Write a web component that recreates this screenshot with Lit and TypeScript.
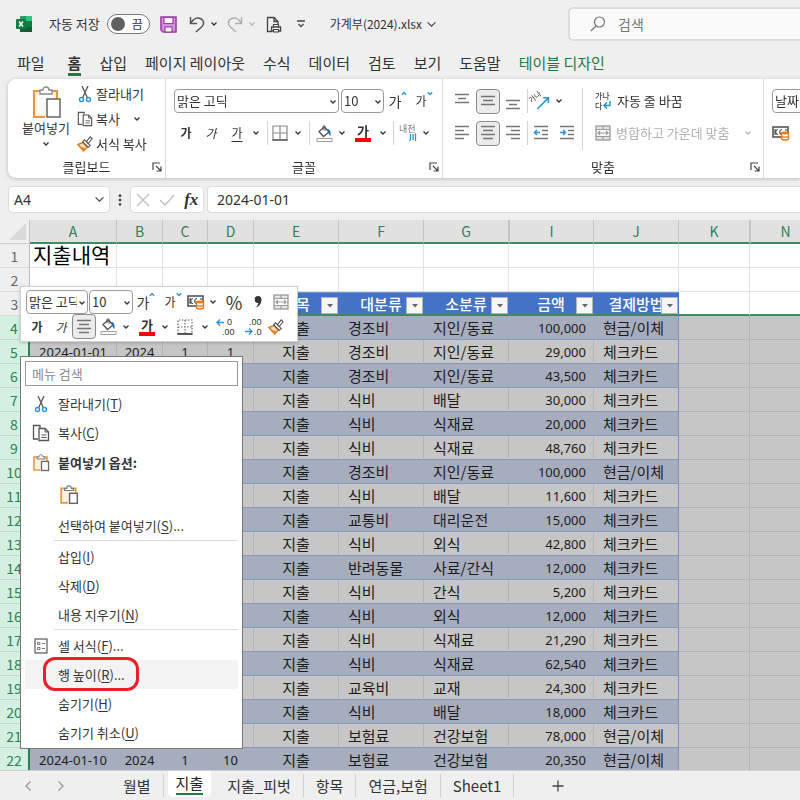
import { LitElement, html, css, svg, nothing } from "lit";
import { customElement } from "lit/decorators.js";
import { classMap } from "lit/directives/class-map.js";

type Expense = [string, string, string, string];

const expenses: Expense[] = [
  ["경조비", "지인/동료", "100,000", "현금/이체"],
  ["경조비", "지인/동료", "29,000", "체크카드"],
  ["경조비", "지인/동료", "43,500", "체크카드"],
  ["식비", "배달", "30,000", "체크카드"],
  ["식비", "식재료", "20,000", "체크카드"],
  ["식비", "식재료", "48,760", "체크카드"],
  ["경조비", "지인/동료", "100,000", "현금/이체"],
  ["식비", "배달", "11,600", "체크카드"],
  ["교통비", "대리운전", "15,000", "체크카드"],
  ["식비", "외식", "42,800", "체크카드"],
  ["반려동물", "사료/간식", "12,000", "체크카드"],
  ["식비", "간식", "5,200", "체크카드"],
  ["식비", "외식", "12,000", "체크카드"],
  ["식비", "식재료", "21,290", "체크카드"],
  ["식비", "식재료", "62,540", "체크카드"],
  ["교육비", "교재", "24,300", "체크카드"],
  ["식비", "배달", "18,000", "체크카드"],
  ["보험료", "건강보험", "78,000", "현금/이체"],
  ["보험료", "건강보험", "20,350", "현금/이체"],
];

const dates: Record<number, string[]> = {
  5: ["2024-01-01", "2024", "1", "1"],
  22: ["2024-01-10", "2024", "1", "10"],
};

const columns = ["A", "B", "C", "D", "E", "F", "G", "I", "J", "K", "N"];
const ribbonTabs = ["파일", "홈", "삽입", "페이지 레이아웃", "수식", "데이터", "검토", "보기", "도움말", "테이블 디자인"];
const sheetTabs = ["월별", "지출", "지출_피벗", "항목", "연금,보험", "Sheet1"];

const lines = (rows: number[][]) => svg`<g stroke="#757575" stroke-width="1.5">${rows.map(
  ([x1, x2, y]) => svg`<path d="M${x1} ${y}H${x2}"/>`
)}</g>`;

const clipboard = svg`
  <path d="M4 5h23v26H4z" fill="#fdf0d8"/><path d="M7 8h17v20H7z" fill="#fafafa"/>
  <path d="M11 5H4v26h11M21 5h6v8" fill="none" stroke="#e8973a" stroke-width="2"/>
  <path d="M10 8V4h3c0-4 6-4 6 0h3v4z" fill="#fff" stroke="#888" stroke-width="1.300"/>
  <rect x="17" y="13" width="13" height="18" fill="#fff" stroke="#666" stroke-width="1.500"/>`;

const pictures: Record<string, [string, unknown]> = {
  excel: ["0 0 16 16", svg`
    <rect x="4" y="0" width="12" height="16" rx="1" fill="#21a366"/>
    <rect x="10" y="0" width="6" height="5" fill="#33c481"/><rect x="10" y="5" width="6" height="6" fill="#107c41"/>
    <rect x="4" y="11" width="12" height="5" fill="#185c37"/><rect x="0" y="3" width="10" height="10" rx="1" fill="#107c41"/>
    <path d="M3 5.500l4 5M7 5.500l-4 5" stroke="#fff" stroke-width="1.500"/>`],
  save: ["0 0 17 17", svg`
    <path d="M1 1h15v15H3l-2-2z" fill="#d693dc" stroke="#9b3fa5" stroke-width="1.600"/>
    <rect x="4" y="1.500" width="9" height="6" fill="#fff" stroke="#9b3fa5" stroke-width="1.200"/>
    <rect x="5" y="11" width="7" height="5" fill="#fff" stroke="#9b3fa5" stroke-width="1.200"/>`],
  undo: ["0 0 16 17", svg`<path d="M1.500 1v6.500h6.500M1.500 7.500C4 3 8 1 11.500 2.500c4 2 4 6 1 8.500L7 16" fill="none" stroke="#555" stroke-width="1.500"/>`],
  redo: ["0 0 16 17", svg`<path d="M14.500 1v6.500H8M14.500 7.500C12 3 8 1 4.500 2.500c-4 2-4 6-1 8.500L9 16" fill="none" stroke="#b0b0b0" stroke-width="1.500"/>`],
  print: ["0 0 16 17", svg`
    <path d="M6 15.500H1.500v-14H8l4 4V8M8 1.500v4h4" fill="none" stroke="#444" stroke-width="1.300"/>
    <path d="M7.500 11V8.500h5V11" fill="#efefef" stroke="#444" stroke-width="1.200"/>
    <path d="M5.600 11h9v4h-9z" fill="#efefef" stroke="#444" stroke-width="1.300"/><path d="M7.500 13.500h5V16h-5z" fill="#efefef" stroke="#444" stroke-width="1.200"/>`],
  more: ["0 0 10 8", svg`<path d="M1 1h8M2.500 4L5 6.500 7.500 4" fill="none" stroke="#444" stroke-width="1.300"/>`],
  chevron: ["0 0 8 6", svg`<path d="M1.500 1.500L4 4l2.500-2.500" fill="none" stroke="#333" stroke-width="1.300"/>`],
  paleChevron: ["0 0 8 6", svg`<path d="M1.500 1.500L4 4l2.500-2.500" fill="none" stroke="#b8b8b8" stroke-width="1.300"/>`],
  bigChevron: ["0 0 12 8", svg`<path d="M1.500 1.500L6 6l4.500-4.500" fill="none" stroke="#444" stroke-width="1.300"/>`],
  search: ["0 0 16 16", svg`<circle cx="9.500" cy="6" r="5" fill="none" stroke="#777" stroke-width="1.200"/><path d="M6 10L.8 15" stroke="#777" stroke-width="1.300"/>`],
  paste: ["0 0 32 32", clipboard],
  smallPaste: ["0 0 18 18", svg`
    <path d="M2 3h13v13H2z" fill="#fdf3e0"/><path d="M6 3H2v13h6M12 3h3v4" fill="none" stroke="#e8973a" stroke-width="1.600"/>
    <path d="M5 5V3h2c0-3 4-3 4 0h2v2z" fill="#fff" stroke="#777"/><rect x="9.500" y="7.500" width="7" height="9" fill="#fff" stroke="#666" stroke-width="1.300"/>`],
  cut: ["0 0 16 18", svg`
    <path d="M5 1l5.500 12M11 1L5.500 13" stroke="#555" stroke-width="1.300"/>
    <circle cx="4.500" cy="14.500" r="2" fill="none" stroke="#2b93d6" stroke-width="1.400"/><circle cx="11.500" cy="14.500" r="2" fill="none" stroke="#2b93d6" stroke-width="1.400"/>`],
  copy: ["0 0 18 18", svg`
    <path d="M6 15H1.500V1.500H8V4" fill="none" stroke="#555" stroke-width="1.300"/>
    <path d="M7 4.500h6l3.500 3.500v8.500H7z" fill="#fff" stroke="#555" stroke-width="1.300"/><path d="M13 4.500V8h3.500M9.500 11h5M9.500 13.500h5" fill="none" stroke="#555"/>`],
  brush: ["0 0 17 17", svg`
    <path d="M1 9l5-2 5 5-4 4z" fill="#fbe0bd" stroke="#e07b1a" stroke-width="1.500"/><path d="M3 11l6 2-2 3z" fill="#e8892b"/>
    <path d="M6 6l2-2 6 6-2 2z" fill="#fff" stroke="#555" stroke-width="1.200"/><path d="M10 6l4-5 2 2-4 5z" fill="#fff" stroke="#555" stroke-width="1.200"/>`],
  launcher: ["0 0 10 10", svg`<path d="M1 8V1h7M4 4l4.500 4.500M9 4.500V9H4.500" fill="none" stroke="#444" stroke-width="1.200"/>`],
  borders: ["0 0 16 16", svg`<path d="M1 15V1h14v14M8 1v14M1 8h14" fill="none" stroke="#8a8a8a" stroke-width="1.200"/><path d="M.4 15h15.200" stroke="#555" stroke-width="1.600"/>`],
  dotted: ["0 0 16 16", svg`<path d="M1 15V1h14v14M8 1v14M1 8h14" fill="none" stroke="#666" stroke-width="1.200" stroke-dasharray="1.500 1.500"/><path d="M.4 15h15.200" stroke="#444" stroke-width="1.800"/>`],
  bucket: ["0 0 17 17", svg`
    <path d="M3 6.500L8.500 2l4.500 5-5.500 4.500z" fill="#fff" stroke="#555" stroke-width="1.300"/><path d="M7 5V1.500c0-1 2-1 2 0V6" fill="none" stroke="#555"/>
    <path d="M11 4c3 0 4 2 3.500 7-2-1-2-4-3.500-7z" fill="#1d6fa8"/><rect x="1" y="13.500" width="15" height="3" fill="#fff" stroke="#a0a0a0"/>`],
  topAlign: ["0 0 16 16", lines([[1, 15, 1.5], [4, 12, 5.5], [1, 15, 9.5]])],
  midAlign: ["0 0 16 16", lines([[1, 15, 3.5], [3, 13, 7.5], [1, 15, 11.5]])],
  lowAlign: ["0 0 16 16", lines([[1, 15, 7.5], [4, 12, 11.5], [1, 15, 15.5]])],
  left: ["0 0 16 16", lines([[1, 15, 1.5], [1, 10, 5.5], [1, 15, 9.5], [1, 10, 13.5]])],
  center: ["0 0 16 16", lines([[1, 15, 1.5], [3, 13, 5.5], [1, 15, 9.5], [3, 13, 13.5]])],
  right: ["0 0 16 16", lines([[1, 15, 1.5], [6, 15, 5.5], [1, 15, 9.5], [6, 15, 13.5]])],
  outdent: ["0 0 16 16", svg`${lines([[1, 15, 1.5], [9, 15, 5.5], [9, 15, 9.5], [1, 15, 13.5]])}<path d="M7 7.500H1.500M4 5L1.500 7.500 4 10" fill="none" stroke="#2b93d6" stroke-width="1.500"/>`],
  indent: ["0 0 16 16", svg`${lines([[1, 15, 1.5], [9, 15, 5.5], [9, 15, 9.5], [1, 15, 13.5]])}<path d="M1 7.500h5.500M4 5l2.500 2.500L4 10" fill="none" stroke="#2b93d6" stroke-width="1.500"/>`],
  slant: ["0 0 17 17", svg`
    <text x="-1" y="10" font-size="7" fill="#333" transform="rotate(-38 0 10)">가나</text><path d="M5 16L15 6M10.500 5.500h5v5" fill="none" stroke="#2b93d6" stroke-width="1.500"/>`],
  wrap: ["0 0 17 18", svg`
    <text x="0" y="7" font-size="8" font-weight="500" fill="#444">가나</text><text x="0" y="17" font-size="8" font-weight="500" fill="#444">다</text>
    <path d="M15 9v4.500H9.500M12 10.500l-3 3 3 3" fill="none" stroke="#2b93d6" stroke-width="1.500"/>`],
  merge: ["0 0 16 16", svg`<rect x="1" y="1" width="14" height="14" fill="#e6e6e6" stroke="#9a9a9a" stroke-width="1.300"/><path d="M1 4.500h14M1 11.500h14M8 1v3.500M8 11.500V15" stroke="#9a9a9a" stroke-width="1.200"/>
    <rect x="2" y="5" width="12" height="6" fill="#fff"/><path d="M3 8h10M5 6L3 8l2 2M11 6l2 2-2 2" fill="none" stroke="#9a9a9a" stroke-width="1.200"/>`],
  money: ["0 0 18 16", svg`
    <rect x="1" y="2" width="15" height="10" fill="#fff" stroke="#555" stroke-width="1.600"/><path d="M6 4.500c-3 0-3 5 0 5M10 4.500c-3 0-3 5 0 5M3 4v6M14 4v2" fill="none" stroke="#555" stroke-width="1.200"/>
    <path d="M9.500 8v5.500c0 2 7 2 7 0V8z" fill="#fff" stroke="#e87818" stroke-width="1.400"/><ellipse cx="13" cy="8" rx="3.500" ry="1.400" fill="#e87818"/><path d="M9.500 11c0 1.500 7 1.500 7 0" fill="none" stroke="#e87818" stroke-width="1.300"/>`],
  natural: ["0 0 18 18", svg`<text x="0" y="8" font-size="9" fill="#777">내천</text><path d="M11.500 10v4q0 2-1 3M14 10v6M16.500 9.500V17" fill="none" stroke="#2b93d6" stroke-width="1.300"/>`],
  comma: ["0 0 10 14", svg`<path d="M5 1a3.500 3.500 0 1 0 .5 7Q5 11 2 12.500q6-1 6.500-7.500Q8.500 1 5 1z" fill="#333"/>`],
  lessDigits: ["0 0 18 18", svg`<text class="digit" x="11" y="7">0</text><text class="digit" x="6" y="17">.00</text><path d="M8 4.500H1M4 1.500l-3 3 3 3" fill="none" stroke="#2b93d6" stroke-width="1.400"/>`],
  moreDigits: ["0 0 18 18", svg`<text class="digit" x="5" y="7">.00</text><text class="digit" x="10" y="17">.0</text><path d="M1 13.500h7M5 10.500l3 3-3 3" fill="none" stroke="#2b93d6" stroke-width="1.400"/>`],
  up: ["0 0 6 5", svg`<path d="M.8 3.800L3 1.500l2.200 2.300" fill="none" stroke="#2b93d6" stroke-width="1.400"/>`],
  down: ["0 0 6 5", svg`<path d="M.8 1.200L3 3.500l2.200-2.300" fill="none" stroke="#2b93d6" stroke-width="1.400"/>`],
  cancel: ["0 0 14 14", svg`<path d="M1 1l12 12M13 1L1 13" stroke="#bdbdbd" stroke-width="1.200"/>`],
  accept: ["0 0 16 12", svg`<path d="M1 6l5 5L15 1" fill="none" stroke="#bdbdbd" stroke-width="1.300"/>`],
  dots: ["0 0 4 14", svg`<path d="M.8 1.500h2.400v2.400H.8zM.8 5.800h2.400v2.400H.8zM.8 10.200h2.400v2.400H.8z" fill="#444"/>`],
  corner: ["0 0 17 17", svg`<path d="M17 0v17H0z" fill="#d9d9d9"/>`],
  filter: ["0 0 8 5", svg`<path d="M1 1h6L4 4.500z" fill="#666"/>`],
  previous: ["0 0 8 12", svg`<path d="M6.500 1.500L2 6l4.500 4.500" fill="none" stroke="#999" stroke-width="1.300"/>`],
  next: ["0 0 8 12", svg`<path d="M1.500 1.500L6 6l-4.500 4.500" fill="none" stroke="#999" stroke-width="1.300"/>`],
  plus: ["0 0 12 12", svg`<path d="M6 .5v11M.5 6h11" stroke="#444" stroke-width="1.300"/>`],
  format: ["0 0 14 16", svg`<rect x="1" y="1" width="12" height="14" fill="#fff" stroke="#666" stroke-width="1.300"/><path d="M3.500 4.500h2.500v2h-2.500zM3.500 9.500h2.500v2h-2.500zM8 5.500h3M8 10.500h3" fill="none" stroke="#777"/>`],
};

const icon = (name: string, width?: number) => {
  const [box, body] = pictures[name];
  const [, , w, h] = box.split(" ").map(Number);
  const shown = width ?? w;
  return html`<svg class="icon" viewBox=${box} width=${shown} height=${Math.round((shown * h) / w)} aria-hidden="true">${body}</svg>`;
};

const tool = (label: string, content: unknown, extra = "") =>
  html`<button class="tool ${extra}" type="button" aria-label=${label}>${content}</button>`;

const chevron = () => tool("옵션", icon("chevron"));
const rule = () => html`<span class="rule"></span>`;

const dropdown = (label: string, value: string) => html`
  <span class="dropdown">
    <select aria-label=${label}><option>${value}</option></select>
    ${icon("chevron")}
  </span>`;

const fontColor = () => html`<span class="swatch">가</span>`;

@customElement("app-root")
export class AppRoot extends LitElement {
  static styles = css`
    :host {
      display: flex;
      flex-direction: column;
      height: 100vh;
      overflow: hidden;
      background: #efefef;
      color: #333;
      font: 13px/20px "Noto Sans CJK KR", "Noto Sans", sans-serif;
    }
    * { box-sizing: border-box; }
    button, select, input {
      font: inherit;
      color: inherit;
      margin: 0;
      padding: 0;
      border: 0;
      background: none;
      border-radius: 0;
      outline: none;
    }
    .icon { display: block; flex: none; overflow: visible; }
    .digit { font: 9px "Liberation Sans", sans-serif; fill: #333; }
    .tool { display: flex; align-items: center; justify-content: center; }
    .rule { width: 1px; height: 24px; background: #d4d4d4; }

    .title-bar { display: flex; height: 48px; flex: none; align-items: center; }
    .quick { display: flex; flex: 0 0 568px; align-items: center; padding-left: 16px; }
    .auto { display: flex; align-items: center; gap: 7px; margin: 0 10px 0 17px; }
    .toggle {
      display: flex; align-items: center; justify-content: space-between;
      width: 43px; height: 20px; padding: 0 6px 0 3px;
      border: 1px solid #777; border-radius: 10px; background: #fff; font-size: 12px;
    }
    .knob { width: 14px; height: 14px; border-radius: 7px; background: #616161; }
    .history { display: flex; align-items: center; gap: 5px; margin-left: 12px; }
    .history + .history { margin-left: 9px; }
    .history + .tool { margin-left: 10px; }
    .customize { margin: 0 24px 0 14px; }
    .file { display: flex; align-items: center; gap: 4px; font-size: 12px; }
    .search {
      display: flex; flex: 1; min-width: 0; height: 34px; align-items: center; gap: 12px; padding-left: 20px;
      border: 2px solid #dcdcdc; border-right: 0; border-radius: 5px 0 0 5px; background: #fafafa;
    }
    .search input { flex: 1; min-width: 0; font-size: 14px; }
    .search input::placeholder { color: #777; opacity: 1; }

    .ribbon-tabs { display: flex; height: 31px; flex: none; gap: 18px; padding-left: 17px; font-size: 15px; }
    .ribbon-tabs button { height: 28px; padding-top: 4px; white-space: nowrap; border-bottom: 3px solid transparent; }
    .ribbon-tabs .active { margin-left: 5px; font-weight: 700; border-color: #1e7a45; }
    .ribbon-tabs .context { color: #1e7a45; }

    .ribbon {
      display: flex; flex: none; height: 99px; margin-left: 8px; overflow: hidden;
      background: #fff; border-radius: 8px 0 0 8px;
    }
    .ribbon-shadow { flex: none; filter: drop-shadow(0 1px 2px #bbb); }
    .group { display: grid; flex: none; grid-template-rows: 78px 20px; border-right: 1px solid #d9d9d9; }
    .caption { display: grid; grid-template-columns: 16px 1fr 16px; text-align: center; align-items: center; }
    .caption span { grid-column: 2; }
    .clip-group { width: 158px; }
    .font-group { width: 277px; }
    .align-group { width: 321px; }
    .number-group { flex: 1; border: 0; padding-left: 8px; overflow: hidden; }
    .number-group .rows { grid-template-columns: 120px; }
    .clip { display: grid; grid-template-columns: 62px 1fr; padding: 2px 0 0 7px; }
    .big { display: flex; flex-direction: column; align-items: center; padding-top: 5px; }
    .big svg:last-child { margin-top: 3px; }
    .stack { display: grid; grid-template-rows: repeat(3, 25px); }
    .labelled { display: flex; align-items: center; gap: 3px; white-space: nowrap; }
    .labelled .more { margin-left: 10px; }
    .rows { display: grid; grid-template-rows: 32px 32px; padding-top: 6px; align-content: start; align-items: center; }
    .font-rows { padding-left: 8px; }
    .tools { display: grid; align-items: center; justify-items: center; }
    .font-top { grid-template-columns: 165px 43px 24px 24px; column-gap: 2px; }
    .font-low { grid-template-columns: 24px 26px 26px 12px 10px 16px 20px 2px 28px 8px 34px 6px 14px 16px 20px; }
    .align { display: grid; grid-template-columns: 132px 6px 1fr; padding-left: 7px; }
    .align-tools { grid-template-columns: 24px 28px 22px 6px 22px 30px; }
    .align .tall { align-self: start; height: 62px; margin-top: 9px; width: 1px; background: #d4d4d4; }
    .wide .labelled { padding-left: 7px; gap: 5px; }
    .near { justify-self: start; padding-left: 3px; }
    .faded { color: #b0b0b0; }
    .pressed { width: 24px; height: 25px; background: #ececec; border: 1px solid #8a8a8a; border-radius: 4px; }
    .dropdown { position: relative; display: block; width: 100%; }
    .dropdown select {
      appearance: none; display: block; width: 100%; height: 24px; padding: 0 10px 0 2px;
      border: 1px solid #9a9a9a; border-radius: 4px; background: #fff;
    }
    .dropdown .icon { position: absolute; right: 2px; top: 10px; pointer-events: none; }
    .bold { font-weight: 700; font-size: 12px; }
    .italic { font-style: italic; font-size: 12px; }
    .under { text-decoration: underline; text-underline-offset: 3px; }
    .sized { align-items: flex-start; font-size: 14px; }
    .sized.small, .small { font-size: 12px; }
    .swatch { display: block; width: 16px; line-height: 14px; border-bottom: 4px solid #f00; font-weight: 700; text-align: center; }

    .formula { display: flex; flex: none; height: 42px; padding: 8px 0 7px 8px; }
    .box { display: flex; align-items: center; background: #fff; border: 1px solid #dcdcdc; border-radius: 4px; }
    .name { width: 102px; padding: 0 4px 0 5px; justify-content: space-between; }
    .name input { width: 70px; font: 14px/20px "Noto Sans", sans-serif; }
    .dots { width: 20px; }
    .entry { width: 74px; justify-content: space-around; margin-right: 3px; }
    .fx { font: italic 700 17px/20px "Liberation Serif", serif; }
    .content { flex: 1; padding-left: 9px; border-right: 0; border-radius: 4px 0 0 4px; }
    .content input { flex: 1; min-width: 0; font: 14px/20px "Noto Sans", sans-serif; }

    .sheet { position: relative; flex: 1; min-height: 0; overflow: hidden; background: #fff; }
    table { width: 100%; min-width: 821px; table-layout: fixed; border-collapse: separate; border-spacing: 0; }
    th, td { padding: 0; height: 24px; line-height: 20px; white-space: nowrap; overflow: hidden; font-weight: 400; }
    .c-head { width: 30px; } .c-a { width: 87px; } .c-b { width: 46px; } .c-c { width: 45px; }
    .c-e { width: 85px; } .c-k { width: 71px; }
    thead th {
      height: 23px; font-size: 14px; color: #2f8057; background: #e1e1e1;
      border-right: 1px solid #c4c4c4; border-bottom: 2px solid #3f8a5f;
    }
    thead .corner { background: #efefef; border-bottom: 1px solid #cfcfcf; padding: 3px 3px 3px 9px; }
    thead .gap { border-left: 1px solid #c4c4c4; }
    tbody th { font-size: 14px; color: #666; background: #efefef; border-bottom: 1px solid #d9d9d9; border-right: 1px solid #bbb; }
    tbody .picked { color: #2f8057; background: #d3f0e0; border-right: 2px solid #2f8057; border-bottom-color: #c5d8cd; }
    td { border-right: 1px solid #e2e2e2; border-bottom: 1px solid #e2e2e2; }
    .sheet-title .heading-cell { overflow: visible; padding: 0 0 3px 3px; font-size: 21px; color: #000; }
    .edge td { border-bottom: 2px solid #3f8a5f; }
    .edge .field {
      position: relative; background: #4472c4; color: #fff; font-size: 15px; font-weight: 500; text-align: center;
      border-right-color: #4472c4; border-top: 1px solid #6d92d6;
    }
    .drop {
      position: absolute; right: 0; bottom: 0; width: 17px; height: 17px;
      display: flex; align-items: center; justify-content: center;
      background: #f6f6f6; border: 1px solid #b5b5b5;
    }
    .data td { background: #c6c6c6; border-color: #b3b3b3; font-size: 15px; color: #1c1c1c; }
    .data .cell { border-bottom-color: #8397c0; }
    .band .cell { background: #a6aebd; border-right-color: #a6aebd; }
    .data .last { border-right-color: #7d92bd; }
    .text { padding-left: 9px; }
    .data .mid { text-align: center; }
    .data .figure { font: 13px/20px "Noto Sans", sans-serif; }
    .data .amount { text-align: right; padding-right: 7px; }

    .mini {
      position: absolute; left: 20px; top: 66px; width: 278px; height: 56px; padding: 3px 5px;
      background: #fff; border: 1px solid #d0d0d0; box-shadow: 0 1px 3px #0003; display: grid; grid-template-rows: 24px 24px;
    }
    .mini-top { grid-template-columns: 62px 44px 24px 28px 16px 16px 24px 22px 22px; column-gap: 1px; }
    .mini-low { grid-template-columns: 22px 26px 20px 28px 8px 34px 2px 38px 2px 38px 18px 28px; }
    .percent { font-size: 18px; }

    .menu {
      position: absolute; left: 20px; top: 136px; width: 223px; padding: 4px 4px 1px;
      background: #fff; border: 1px solid #777;
    }
    .menu input { display: block; width: 213px; height: 25px; margin-bottom: 3px; padding: 0 6px; border: 1px solid #999; }
    .menu input::placeholder { color: #8a8a8a; opacity: 1; }
    .item {
      position: relative; display: grid; width: 100%; height: 29px; grid-template-columns: 18px 1fr; gap: 8px;
      align-items: center; justify-items: start; padding-left: 7px; text-align: left; white-space: nowrap;
    }
    .item .icon { justify-self: center; }
    .item span { grid-column: 2; }
    .heading { height: 32px; font-weight: 700; }
    .option { height: 32px; display: flex; align-items: center; padding-left: 34px; }
    .hover { background: #f3f3f3; }
    .key { text-decoration: underline; text-underline-offset: 2px; }
    .menu hr { height: 1px; margin: 0 0 1px 29px; border: 0; background: #dcdcdc; }
    .ring { position: absolute; left: 18px; top: -3px; width: 96px; height: 34px; border: 3px solid #ea1f28; border-radius: 12px; }

    .sheets { display: flex; flex: none; height: 30px; font-size: 15px; border-top: 1px solid #d0d0d0; padding-left: 24px; }
    .arrows { display: flex; width: 87px; gap: 25px; align-items: center; }
    .sheet-tab { margin: 3px 0; padding: 0 12px; border-right: 1px solid #d0d0d0; white-space: nowrap; }
    .sheet-tab.current { margin: 0 4px 3px; padding: 0 8px; border: 0; background: #fff; border-radius: 0 0 5px 5px; color: #222; }
    .current span { display: block; border-bottom: 2px solid #1e7a45; }
    .add { padding-left: 38px; }
  `;

  private titleBar() {
    return html`
      <header class="title-bar">
        <div class="quick">
          ${icon("excel")}
          <div class="auto">
            <span id="auto">자동 저장</span>
            <button class="toggle" type="button" role="switch" aria-checked="false" aria-labelledby="auto">
              <span class="knob"></span>끔
            </button>
          </div>
          ${tool("저장", icon("save"))}
          <div class="history">${tool("실행 취소", icon("undo"))}${chevron()}</div>
          <div class="history">${tool("다시 실행", icon("redo"))}${tool("옵션", icon("paleChevron"))}</div>
          ${tool("인쇄", icon("print"))}
          ${tool("사용자 지정", icon("more"), "customize")}
          <button class="file" type="button">가계부(2024).xlsx ${icon("bigChevron", 11)}</button>
        </div>
        <label class="search">${icon("search")}<input type="search" placeholder="검색" aria-label="검색" /></label>
      </header>
      <nav class="ribbon-tabs">
        ${ribbonTabs.map(
          (t, i) => html`<button type="button" class=${classMap({ active: i === 1, context: i === 9 })}>${t}</button>`
        )}
      </nav>`;
  }

  private caption(text: string) {
    return html`<div class="caption"><span>${text}</span>${tool(`${text} 설정`, icon("launcher"))}</div>`;
  }

  private ribbon() {
    return html`
      <div class="ribbon-shadow"><div class="ribbon">
        <section class="group clip-group">
          <div class="clip">
            <button class="big" type="button">${icon("paste", 32)}붙여넣기${icon("chevron")}</button>
            <div class="stack">
              <button class="labelled" type="button">${icon("cut")}잘라내기</button>
              <button class="labelled" type="button">${icon("copy", 16)}복사<span class="more">${icon("chevron")}</span></button>
              <button class="labelled" type="button">${icon("brush", 16)}서식 복사</button>
            </div>
          </div>
          ${this.caption("클립보드")}
        </section>
        <section class="group font-group">
          <div class="rows font-rows">
            <div class="tools font-top">
              ${dropdown("글꼴", "맑은 고딕")}${dropdown("글꼴 크기", "10")}
              ${tool("크게", html`가${icon("up", 6)}`, "sized")}${tool("작게", html`가${icon("down", 6)}`, "sized small")}
            </div>
            <div class="tools font-low">
              ${tool("굵게", "가", "bold")}${tool("기울임꼴", "가", "italic")}${tool("밑줄", "가", "under small")}${chevron()}${rule()}
              ${tool("테두리", icon("borders"))}${chevron()}${rule()}
              ${tool("채우기 색", icon("bucket"))}${chevron()}${tool("글꼴 색", fontColor())}${chevron()}${rule()}
              ${tool("윗주", icon("natural"))}${chevron()}
            </div>
          </div>
          ${this.caption("글꼴")}
        </section>
        <section class="group align-group">
          <div class="align">
            <div class="rows">
              <div class="tools align-tools">
                ${tool("위쪽", icon("topAlign"))}${tool("가운데", icon("midAlign"), "pressed")}${tool("아래쪽", icon("lowAlign"))}${rule()}
                ${tool("방향", icon("slant", 18))}${tool("옵션", icon("chevron"), "near")}
              </div>
              <div class="tools align-tools">
                ${tool("왼쪽", icon("left"))}${tool("가운데 맞춤", icon("center"), "pressed")}${tool("오른쪽", icon("right"))}${rule()}
                ${tool("내어쓰기", icon("outdent"))}${tool("들여쓰기", icon("indent"))}
              </div>
            </div>
            <span class="tall"></span>
            <div class="rows wide">
              <button class="labelled" type="button">${icon("wrap", 17)}자동 줄 바꿈</button>
              <button class="labelled faded" type="button">${icon("merge")}병합하고 가운데 맞춤<span class="more">${icon("paleChevron")}</span></button>
            </div>
          </div>
          ${this.caption("맞춤")}
        </section>
        <section class="group number-group">
          <div class="rows">
            ${dropdown("표시 형식", "날짜")}
            <button class="labelled" type="button" aria-label="회계">${icon("money")}</button>
          </div>
        </section>
      </div></div>`;
  }

  private formulaBar() {
    return html`
      <div class="formula">
        <label class="box name"><input aria-label="이름 상자" .value=${"A4"} />${icon("bigChevron", 11)}</label>
        ${tool("크기 조정", icon("dots"), "dots")}
        <div class="box entry">${tool("취소", icon("cancel"))}${tool("입력", icon("accept"))}${tool("함수", "fx", "fx")}</div>
        <label class="box content"><input aria-label="수식" .value=${"2024-01-01"} /></label>
      </div>`;
  }

  private grid() {
    const heads = ["항목", "대분류", "소분류", "금액", "결제방법"];
    const blanks = (n: number) => Array.from({ length: n }, () => html`<td></td>`);
    return html`
      <table>
        <colgroup>
          <col class="c-head" /><col class="c-a" /><col class="c-b" /><col class="c-c" /><col class="c-b" /><col class="c-e" />
          <col class="c-e" /><col class="c-e" /><col class="c-e" /><col class="c-e" /><col class="c-k" /><col />
        </colgroup>
        <thead>
          <tr>
            <th class="corner">${icon("corner")}</th>
            ${columns.map((c) => html`<th scope="col" class=${classMap({ gap: c === "I" || c === "N" })}>${c}</th>`)}
          </tr>
        </thead>
        <tbody>
          <tr class="sheet-title"><th scope="row">1</th><td class="heading-cell">지출내역</td>${blanks(10)}</tr>
          <tr><th scope="row">2</th>${blanks(11)}</tr>
          <tr class="edge">
            <th scope="row">3</th>
            ${[0, 1, 2, 3].map(() => html`<td class="field"></td>`)}
            ${heads.map((h) => html`<td class="field">${h}<button class="drop" type="button" aria-label="필터">${icon("filter")}</button></td>`)}
            ${blanks(2)}
          </tr>
          ${expenses.map((e, i) => {
            const n = i + 4;
            const date = dates[n] ?? ["", "", "", ""];
            return html`<tr class=${classMap({ data: true, band: i % 2 === 0 })}>
              <th scope="row" class="picked">${n}</th>
              ${date.map((d) => html`<td class="cell mid figure">${d || nothing}</td>`)}
              <td class="cell mid">지출</td><td class="cell text">${e[0]}</td><td class="cell text">${e[1]}</td>
              <td class="cell figure amount">${e[2]}</td><td class="cell text last">${e[3]}</td>${blanks(2)}
            </tr>`;
          })}
        </tbody>
      </table>`;
  }

  private miniToolbar() {
    return html`
      <div class="mini" role="toolbar">
        <div class="tools mini-top">
          ${dropdown("글꼴", "맑은 고딕")}${dropdown("글꼴 크기", "10")}
          ${tool("크게", html`가${icon("up", 6)}`, "sized")}${tool("작게", html`가${icon("down", 6)}`, "sized small")}
          ${tool("회계", icon("money"))}${chevron()}${tool("백분율", "%", "percent")}${tool("쉼표", icon("comma"))}${tool("병합", icon("merge"))}
        </div>
        <div class="tools mini-low">
          ${tool("굵게", "가", "bold")}${tool("기울임꼴", "가", "italic")}${tool("가운데 맞춤", icon("center"), "pressed")}
          ${tool("채우기 색", icon("bucket"))}${chevron()}${tool("글꼴 색", fontColor())}${chevron()}
          ${tool("테두리", icon("dotted"))}${chevron()}
          ${tool("자릿수 늘림", icon("lessDigits"))}${tool("자릿수 줄임", icon("moreDigits"))}${tool("서식 복사", icon("brush", 16))}
        </div>
      </div>`;
  }

  private item(label: string, key: string, tail = "", picture?: unknown, extra: unknown = nothing) {
    return html`<button type="button" role="menuitem" class=${classMap({ item: true, hover: key === "R" })}>
      ${picture ?? nothing}<span>${label}(<span class="key">${key}</span>)${tail}</span>${extra}
    </button>`;
  }

  private menu() {
    return html`
      <div class="menu" role="menu">
        <input type="text" placeholder="메뉴 검색" aria-label="메뉴 검색" />
        ${this.item("잘라내기", "T", "", icon("cut"))}
        ${this.item("복사", "C", "", icon("copy"))}
        <div class="item heading">${icon("smallPaste", 18)}<span>붙여넣기 옵션:</span></div>
        <div class="option">${tool("붙여넣기", icon("smallPaste", 20))}</div>
        ${this.item("선택하여 붙여넣기", "S", "...")}
        <hr />
        ${this.item("삽입", "I")}${this.item("삭제", "D")}${this.item("내용 지우기", "N")}
        <hr />
        ${this.item("셀 서식", "F", "...", icon("format"))}
        ${this.item("행 높이", "R", "...", undefined, html`<i class="ring"></i>`)}
        ${this.item("숨기기", "H")}${this.item("숨기기 취소", "U")}
      </div>`;
  }

  render() {
    return html`
      ${this.titleBar()}${this.ribbon()}${this.formulaBar()}
      <main class="sheet">${this.grid()}${this.miniToolbar()}${this.menu()}</main>
      <footer class="sheets">
        <div class="arrows">${tool("이전", icon("previous"))}${tool("다음", icon("next"))}</div>
        ${sheetTabs.map(
          (t, i) => html`<button type="button" class=${classMap({ "sheet-tab": true, current: i === 1 })}><span>${t}</span></button>`
        )}
        ${tool("새 시트", icon("plus"), "add")}
      </footer>`;
  }
}
